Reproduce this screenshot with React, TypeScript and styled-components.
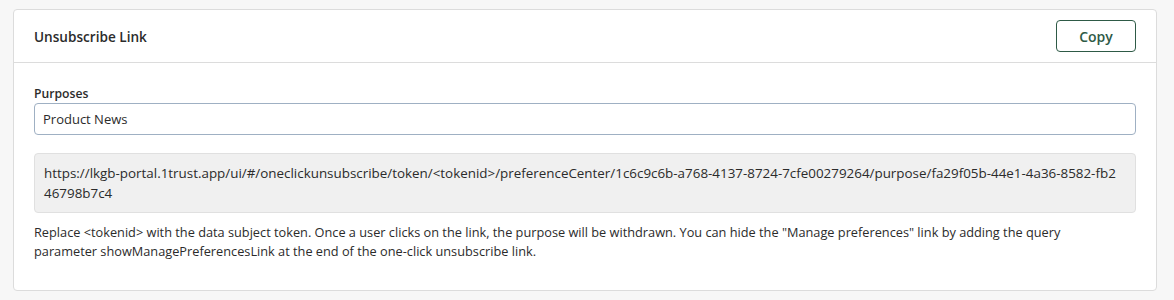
import styled, { createGlobalStyle } from 'styled-components';

const GlobalStyle = createGlobalStyle`
  body {
    margin: 0;
    background: #f7f7f7;
    font-family: "Open Sans", "Liberation Sans", sans-serif;
    color: #2b2b2b;
  }
`;

const LINK =
  'https://lkgb-portal.1trust.app/ui/#/oneclickunsubscribe/token/<tokenid>/preferenceCenter/1c6c9c6b-a768-4137-8724-7cfe00279264/purpose/fa29f05b-44e1-4a36-8582-fb246798b7c4';

const App: React.FC = () => {
  return (
    <Page>
      <GlobalStyle />
      <Card>
        <Header>
          <Title>Unsubscribe Link</Title>
          <CopyButton type="button">Copy</CopyButton>
        </Header>
        <Body>
          <Label>Purposes</Label>
          <Input value="Product News" readOnly />
          <LinkBox>{LINK}</LinkBox>
          <Hint>
            Replace &lt;tokenid&gt; with the data subject token. Once a user clicks on the link, the
            purpose will be withdrawn. You can hide the "Manage preferences" link by adding the query
            parameter showManagePreferencesLink at the end of the one-click unsubscribe link.
          </Hint>
        </Body>
      </Card>
    </Page>
  );
};
export default App;

const Page = styled.div`
  padding: 9px 17px 9px 13px;
`;

const Card = styled.div`
  background: #fff;
  border: 1px solid #dcdcdc;
  border-radius: 4px;
  height: 282px;
  box-sizing: border-box;
`;

const Header = styled.div`
  display: flex;
  justify-content: space-between;
  align-items: center;
  height: 53px;
  box-sizing: border-box;
  padding: 0 20px;
  border-bottom: 1px solid #dcdcdc;
`;

const Title = styled.span`
  font-size: 13.6px;
  font-weight: 600;
  color: #2b2b2b;
`;

const CopyButton = styled.button`
  width: 80px;
  height: 32px;
  background: #fff;
  border: 1px solid #2e5a46;
  border-radius: 4px;
  color: #2e5a46;
  font-family: inherit;
  font-size: 14px;
  font-weight: 600;
  cursor: pointer;
`;

const Body = styled.div`
  display: flex;
  flex-direction: column;
  padding: 24px 20px 0;
`;

const Label = styled.label`
  font-size: 12.2px;
  font-weight: 600;
  line-height: 14px;
  margin-bottom: 2px;
`;

const Input = styled.input`
  height: 32px;
  box-sizing: border-box;
  border: 1px solid #9fb0c3;
  border-radius: 4px;
  padding: 0 8px;
  font-family: inherit;
  font-size: 13px;
  color: #2b2b2b;
  outline: none;
`;

const LinkBox = styled.div`
  margin-top: 18px;
  padding: 9px 14px 9px 9px;
  background: #f0f0f0;
  border: 1px solid #e0e0e0;
  border-radius: 4px;
  font-size: 13.4px;
  line-height: 20px;
  word-break: break-all;
`;

const Hint = styled.p`
  margin: 10px 0 0;
  padding-right: 40px;
  font-size: 12.75px;
  line-height: 19px;
`;
